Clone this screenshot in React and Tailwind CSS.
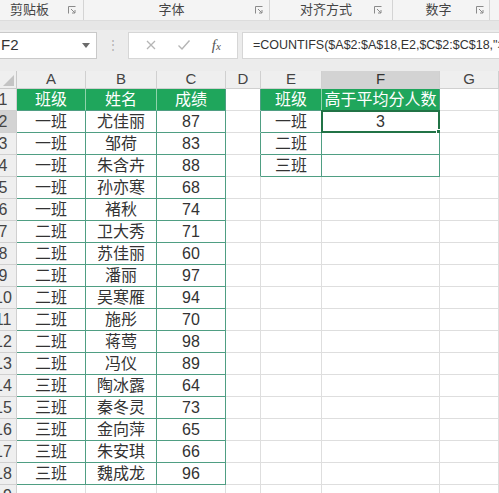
import React from "react";

const rows = [
  ["一班", "尤佳丽", "87"],
  ["一班", "邹荷", "83"],
  ["一班", "朱含卉", "88"],
  ["一班", "孙亦寒", "68"],
  ["一班", "褚秋", "74"],
  ["二班", "卫大秀", "71"],
  ["二班", "苏佳丽", "60"],
  ["二班", "潘丽", "97"],
  ["二班", "吴寒雁", "94"],
  ["二班", "施彤", "70"],
  ["二班", "蒋莺", "98"],
  ["二班", "冯仪", "89"],
  ["三班", "陶冰露", "64"],
  ["三班", "秦冬灵", "73"],
  ["三班", "金向萍", "65"],
  ["三班", "朱安琪", "66"],
  ["三班", "魏成龙", "96"],
];

const summary = [
  ["一班", "3"],
  ["二班", ""],
  ["三班", ""],
];

const cols = ["A", "B", "C", "D", "E", "F", "G"];

// which cells belong to a bordered table: cols index 0..6 (A..G), row 1-based
const inTable = (c, r) =>
  (c >= 0 && c <= 2 && r >= 1 && r <= 18) || (c >= 4 && c <= 5 && r >= 1 && r <= 4);

const isHead = (c, r) => r === 1 && inTable(c, r);

function cellText(c, r) {
  if (r === 1) {
    if (c === 0) return "班级";
    if (c === 1) return "姓名";
    if (c === 2) return "成绩";
    if (c === 4) return "班级";
    if (c === 5) return "高于平均分人数";
    return "";
  }
  if (c <= 2 && r <= 18) return rows[r - 2][c];
  if (c === 4 && r <= 4) return summary[r - 2][0];
  if (c === 5 && r <= 4) return summary[r - 2][1];
  return "";
}

function Launcher() {
  return (
    <svg width="8" height="8" viewBox="0 0 8 8" className="shrink-0">
      <path d="M0.5 7.5V0.5H7.5" fill="none" stroke="#8a8a8a" strokeWidth="1" />
      <path d="M3 3L7 7M7 4V7H4" fill="none" stroke="#8a8a8a" strokeWidth="1" />
    </svg>
  );
}

function Cell({ c, r }) {
  const head = isHead(c, r);
  const greenRight = inTable(c, r) || inTable(c + 1, r);
  const greenBottom = inTable(c, r) || inTable(c, r + 1);
  const rightCls = head && inTable(c + 1, r)
    ? "border-r-[#8fd3ab]"
    : greenRight
    ? "border-r-[#4f9e83]"
    : "border-r-[#dedede]";
  const bottomCls = greenBottom ? "border-b-[#4f9e83]" : "border-b-[#dedede]";
  const selected = c === 5 && r === 2;
  return (
    <div
      className={
        "relative flex items-center justify-center border-r border-b whitespace-nowrap overflow-visible " +
        rightCls +
        " " +
        bottomCls +
        " " +
        (head ? "bg-[#1fa65c] text-white" : "bg-white text-[#333333]")
      }
    >
      <span className="text-[16px] leading-none">{cellText(c, r)}</span>
      {selected && (
        <div className="absolute -left-px -top-px -right-px -bottom-px border-2 border-[#217346]">
          <div className="absolute -right-[4px] -bottom-[4px] w-[6px] h-[6px] bg-[#217346] border border-white" />
        </div>
      )}
    </div>
  );
}

export default function App() {
  const rowNums = Array.from({ length: 19 }, (_, i) => i + 1);
  return (
    <div className="w-[499px] h-[493px] overflow-hidden bg-[#e9e9e9] font-['Liberation_Sans','Noto_Sans_CJK_SC',sans-serif] flex flex-col">
      {/* ribbon group labels */}
      <div className="h-[20px] bg-[#f4f4f4] flex text-[13px] text-[#444444] shrink-0">
        <div className="w-[84px] flex items-center pl-[10px] border-r border-[#d4d4d4]">
          <span className="w-[58px]">剪贴板</span>
          <Launcher />
        </div>
        <div className="w-[186px] flex items-center border-r border-[#d4d4d4]">
          <span className="flex-1 text-center pl-[4px]">字体</span>
          <span className="pr-[6px]"><Launcher /></span>
        </div>
        <div className="w-[123px] flex items-center border-r border-[#d4d4d4]">
          <span className="flex-1 text-center pl-[8px]">对齐方式</span>
          <span className="pr-[10px]"><Launcher /></span>
        </div>
        <div className="w-[97px] flex items-center border-r border-[#d4d4d4]">
          <span className="flex-1 text-center pl-[8px]">数字</span>
          <span className="pr-[5px]"><Launcher /></span>
        </div>
      </div>
      <div className="h-[10px] bg-[#e6e6e6] border-t border-[#dcdcdc] shrink-0" />

      {/* formula bar */}
      <div className="h-[30px] flex items-center shrink-0 bg-[#ececec]">
        <div className="w-[97px] h-[27px] bg-white border border-[#c9c9c9] border-l-0 flex items-center justify-between pl-[1px] pr-[6px]">
          <span className="text-[15px] text-[#333333]">F2</span>
          <svg width="8" height="5" viewBox="0 0 8 5">
            <path d="M0 0H8L4 5Z" fill="#6b6b6b" />
          </svg>
        </div>
        <div className="w-[31px] flex justify-center text-[#b0b0b0] text-[12px] leading-none">⋮</div>
        <div className="w-[110px] h-[27px] bg-white border border-[#d6d6d6] flex items-center justify-around px-[6px]">
          <svg width="12" height="12" viewBox="0 0 12 12">
            <path d="M2 2L10 10M10 2L2 10" stroke="#b5b5b5" strokeWidth="1.3" />
          </svg>
          <svg width="14" height="12" viewBox="0 0 14 12">
            <path d="M1.5 6.5L5 10L12.5 1.5" fill="none" stroke="#b5b5b5" strokeWidth="1.4" />
          </svg>
          <span className="font-['Liberation_Serif',serif] italic text-[15px] text-[#555555]">
            f<span className="text-[11px]">x</span>
          </span>
        </div>
        <div className="ml-[4px] flex-1 h-[27px] bg-white border border-[#d6d6d6] border-r-0 flex items-center pl-[10px] overflow-hidden">
          <span className="whitespace-nowrap text-[12.5px] text-[#333333]">
            =COUNTIFS($A$2:$A$18,E2,$C$2:$C$18,"&gt;"&amp;AVERAGE($C$2:$C$18))
          </span>
        </div>
      </div>
      <div className="h-[11px] bg-[#ececec] shrink-0" />

      {/* sheet */}
      <div className="grid grid-cols-[17px_69px_71px_69px_35px_61px_118px_59px] grid-rows-[18px] auto-rows-[22px] bg-white">
        <div className="bg-[#efefef] border-r border-b border-[#c9c9c9] flex items-end justify-end pr-[2px] pb-[2px]">
          <svg width="11" height="11" viewBox="0 0 11 11">
            <path d="M11 0V11H0Z" fill="#c4c4c4" />
          </svg>
        </div>
        {cols.map((col) => (
          <div
            key={col}
            className={
              "flex items-center justify-center text-[15px] border-r border-b border-[#d0d0d0] " +
              (col === "F" ? "bg-[#d3d3d3] text-[#333333]" : "bg-[#efefef] text-[#444444]")
            }
          >
            {col}
          </div>
        ))}
        {rowNums.map((r) => (
          <React.Fragment key={r}>
            <div
              className={
                "overflow-hidden border-r border-b border-[#d0d0d0] flex items-center " +
                (r === 2 ? "bg-[#d3d3d3]" : "bg-[#efefef]")
              }
            >
              <div className="shrink-0 w-[26px] -ml-[10px] text-center text-[16px] text-[#444444]">{r}</div>
            </div>
            {cols.map((col, c) => (
              <Cell key={col} c={c} r={r} />
            ))}
          </React.Fragment>
        ))}
      </div>
    </div>
  );
}
